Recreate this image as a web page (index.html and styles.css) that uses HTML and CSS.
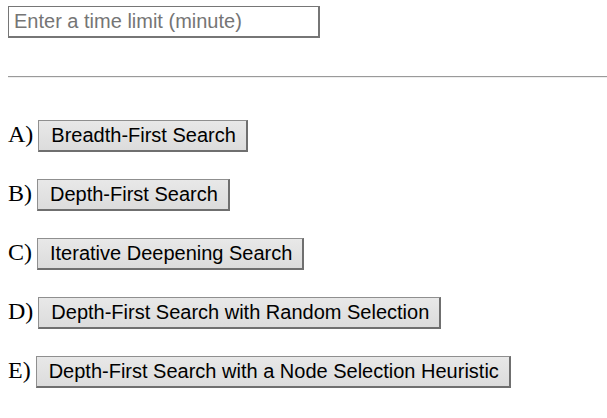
FILE: index.html
```html
<!DOCTYPE html>
<html>
<head>
<meta charset="utf-8">
<link rel="stylesheet" href="styles.css">
</head>
<body>
<div class="top">
  <input class="limit" type="text" placeholder="Enter a time limit (minute)">
</div>
<hr class="rule">
<div class="list">
  <div class="row"><span class="lab">A)</span><button class="btn">Breadth-First Search</button></div>
  <div class="row"><span class="lab">B)</span><button class="btn">Depth-First Search</button></div>
  <div class="row"><span class="lab">C)</span><button class="btn">Iterative Deepening Search</button></div>
  <div class="row"><span class="lab">D)</span><button class="btn">Depth-First Search with Random Selection</button></div>
  <div class="row"><span class="lab">E)</span><button class="btn">Depth-First Search with a Node Selection Heuristic</button></div>
</div>
</body>
</html>
```
FILE: styles.css
```css
html, body {
  margin: 0;
  padding: 0;
  background: #ffffff;
}
body {
  padding: 6px 0 0 8px;
  font-family: "Liberation Serif", "Times New Roman", serif;
  font-size: 24px;
  color: #000;
}
.top {
  display: flex;
}
.limit {
  box-sizing: border-box;
  width: 312px;
  height: 32px;
  margin: 0;
  padding: 0 5px;
  border: 1px solid #767676;
  border-right-width: 2px;
  border-bottom-width: 2px;
  font-family: "Liberation Sans", Arial, sans-serif;
  font-size: 20px;
  color: #000;
  background: #fff;
  outline: none;
}
.limit::placeholder {
  color: #757575;
}
.rule {
  margin: 38px 0 0 0;
  border: none;
  border-top: 1px solid #9a9a9a;
  border-bottom: 1px solid #eeeeee;
  height: 0;
}
.list {
  display: flex;
  flex-direction: column;
  gap: 27px;
  margin-top: 42px;
}
.row {
  display: flex;
  align-items: baseline;
  height: 32px;
}
.lab {
  display: inline-block;
  margin-right: 5px;
}
.btn {
  box-sizing: border-box;
  height: 32px;
  margin: 0;
  padding: 0 10px 0 12px;
  border: 1px solid #8f8f8f;
  border-right: 2px solid #6f6f6f;
  border-bottom: 2px solid #6f6f6f;
  background: linear-gradient(#e8e8e8, #dcdcdc);
  font-family: "Liberation Sans", Arial, sans-serif;
  font-size: 20px;
  color: #000;
}
```
